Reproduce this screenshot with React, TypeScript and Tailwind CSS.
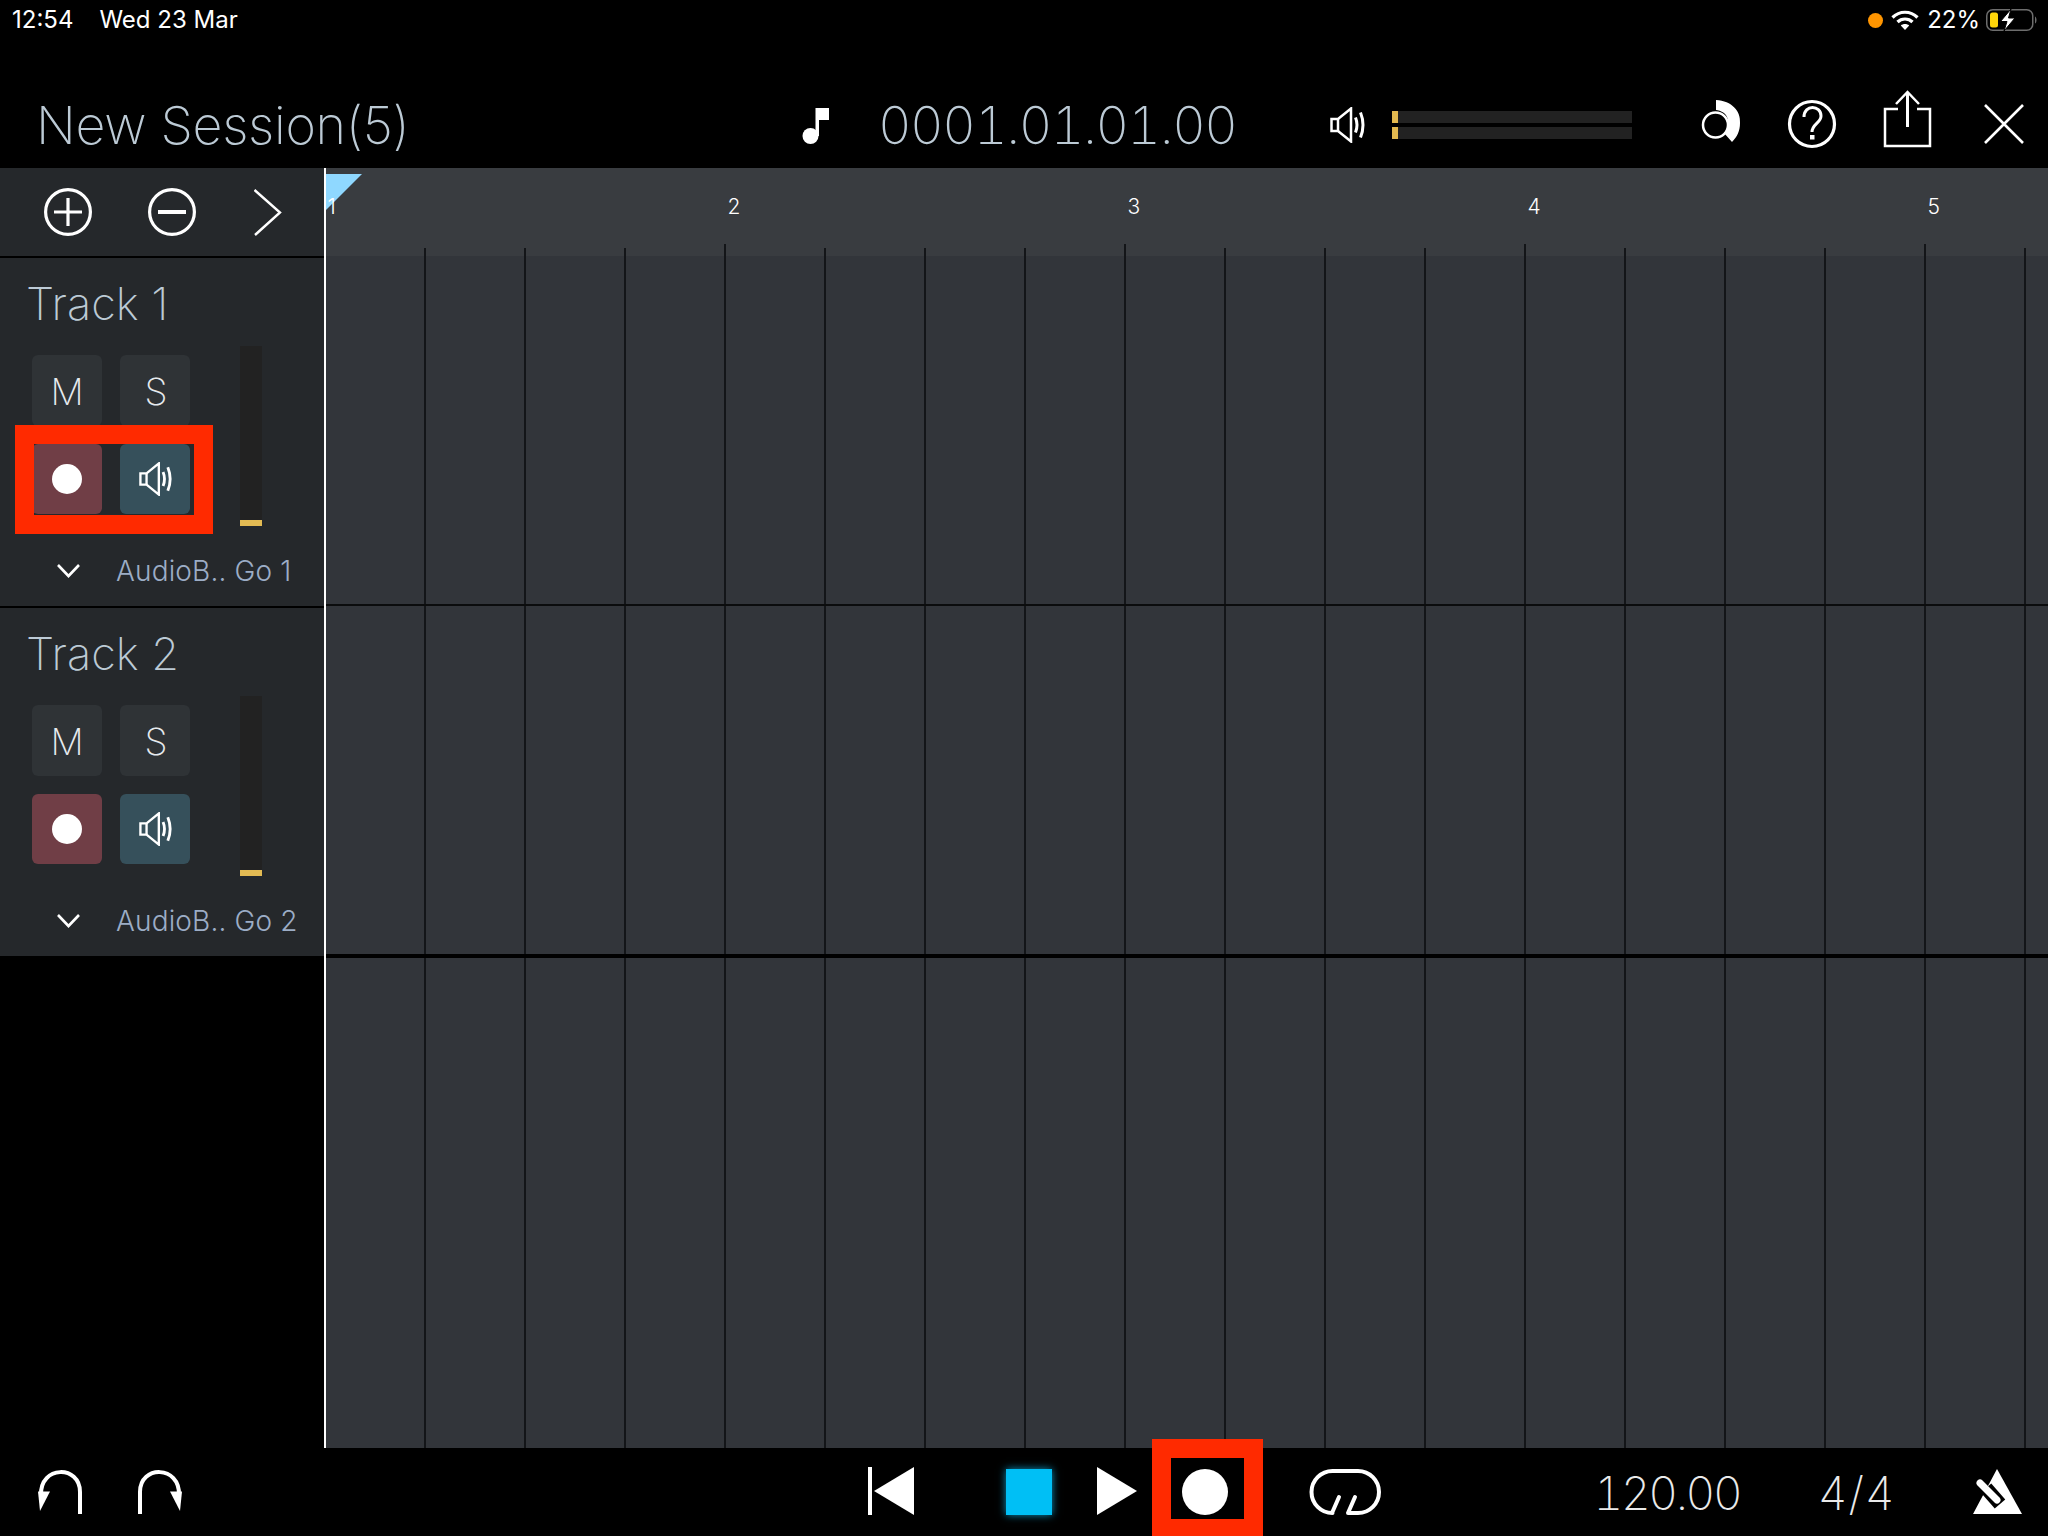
const thin = "font-['Inter',sans-serif] [font-weight:170]";
const CELLS = Array.from({ length: 18 }, (_, i) => i);
const BARS = [1, 2, 3, 4, 5];

function Speaker({ className }: { className: string }) {
  return (
    <svg viewBox="0 0 36 36" fill="none" stroke="white" strokeWidth="2.5" className={className}>
      <path d="M1.5 12H8L21 1.5V34.5L8 24H1.5Z" />
      <path d="M8 12V24" />
      <path d="M25.5 10.5Q28.5 18 25.5 25.5" strokeWidth="3" />
      <path d="M30.5 5.5Q35.5 18 30.5 30.5" strokeWidth="3" />
    </svg>
  );
}

function StatusBar() {
  return (
    <div className="flex h-[40px] items-center justify-between pl-[12px] pr-[10px] font-['Inter',sans-serif] text-[24px] text-white">
      <div className="flex gap-[26px]">
        <span>12:54</span>
        <span>Wed 23 Mar</span>
      </div>
      <div className="flex items-center">
        <div className="size-[15px] rounded-full bg-[#ff9500]" />
        <svg viewBox="0 0 28 20" className="ml-[8px] h-[20px] w-[28px]" fill="none" stroke="white" strokeWidth="3.2">
          <path d="M1.5 7.5C8.5 0.5 19.5 0.5 26.5 7.5" />
          <path d="M6.5 12C10.5 8 17.5 8 21.5 12" />
          <path d="M14 20L9.8 15.6C12 13.6 16 13.6 18.2 15.6Z" fill="white" stroke="none" />
        </svg>
        <span className="ml-[8px]">22%</span>
        <svg viewBox="0 0 52 22" className="ml-[6px] h-[22px] w-[52px]" fill="none">
          <rect x="0.75" y="0.75" width="46" height="20.5" rx="6" stroke="#6d6d6d" strokeWidth="1.5" />
          <path d="M49 7.5C51 8.5 51 13.5 49 14.5Z" fill="#6d6d6d" />
          <rect x="4" y="3.5" width="8" height="15" rx="2.5" fill="#ffd60a" />
          <path d="M25 0L14.5 12.5H21L18 22L29 9H22.5Z" fill="white" stroke="black" strokeWidth="1" />
        </svg>
      </div>
    </div>
  );
}

function Header() {
  return (
    <div className="flex h-[128px] items-center pl-[36px] pt-[42px]">
      <div className={`w-[766px] shrink-0 pt-[2px] text-[52px] leading-none tracking-[-0.3px] text-[#bccad5] ${thin}`}>New Session(5)</div>
      <svg viewBox="802 95 27 60" className="h-[60px] w-[27px] shrink-0" fill="white">
        <circle cx="810.5" cy="136" r="8" />
        <path d="M815.5 108H829V120H819V136H815.5Z" />
      </svg>
      <div className={`w-[501px] shrink-0 pl-[49px] pt-[2px] text-[52px] tabular-nums leading-none tracking-[-1.5px] text-[#bccad5] ${thin}`}>0001.01.01.00</div>
      <Speaker className="size-[36px] shrink-0" />
      <div className="ml-[26px] flex w-[240px] shrink-0 flex-col gap-[4px]">
        <div className="h-[12px] bg-[#222222]">
          <div className="h-full w-[6px] bg-[#e3b94f]" />
        </div>
        <div className="h-[12px] bg-[#222222]">
          <div className="h-full w-[6px] bg-[#e3b94f]" />
        </div>
      </div>
      <svg viewBox="1702 95 38 60" className="ml-[70px] h-[60px] w-[38px] shrink-0 overflow-visible" fill="none">
        <path d="M1716 100C1732 101 1741 111 1740 123C1740 131 1737 137 1732 142L1724 133C1729 128 1730 118 1724 113C1721 111 1718 110 1716 110Z" fill="white" />
        <circle cx="1715.5" cy="125" r="12.5" stroke="white" strokeWidth="2.5" />
      </svg>
      <svg viewBox="1786 95 52 60" className="ml-[46px] h-[60px] w-[52px] shrink-0" fill="none" stroke="white">
        <circle cx="1812" cy="124" r="22.5" strokeWidth="3.2" />
        <path d="M1804 117C1804 104 1821 105 1821 116C1821 123 1812 124 1812 132" strokeWidth="3" />
        <rect x="1810" y="135" width="4.5" height="4.5" fill="white" stroke="none" />
      </svg>
      <svg viewBox="1882 95 51 60" className="ml-[44px] h-[60px] w-[51px] shrink-0 overflow-visible" fill="none" stroke="white" strokeWidth="2.5">
        <path d="M1898 109H1885V146H1930V109H1917" />
        <path d="M1907.5 127V92" strokeWidth="3" />
        <path d="M1896 104L1907.5 92L1919 104" />
      </svg>
      <svg viewBox="1984 95 40 60" className="ml-[51px] h-[60px] w-[40px] shrink-0" fill="none" stroke="white" strokeWidth="2.6">
        <path d="M1985 105L2023 143M2023 105L1985 143" />
      </svg>
    </div>
  );
}

function Track({ name, input }: { name: string; input: string }) {
  return (
    <div className="flex h-[348px] flex-col bg-[#25282b] pl-[32px]">
      <div className={`-ml-[6px] flex h-[88px] items-center pt-[2px] text-[45px] leading-none text-[#bccad5] ${thin}`}>{name}</div>
      <div className="flex h-[180px]">
        <div className="grid grid-cols-[70px_70px] grid-rows-[71px_70px] gap-x-[18px] gap-y-[18px] pt-[9px]">
          <div className={`flex items-center justify-center rounded-[6px] bg-[#2f3336] pt-[2px] text-[37px] text-[#e6eaee] ${thin}`}>M</div>
          <div className={`flex items-center justify-center rounded-[6px] bg-[#2f3336] pl-[2px] pt-[2px] text-[37px] text-[#e6eaee] ${thin}`}>S</div>
          <div className="flex items-center justify-center rounded-[6px] bg-[#703e46]">
            <div className="size-[30px] rounded-full bg-white" />
          </div>
          <div className="flex items-center justify-center rounded-[6px] bg-[#36505b] pl-[2px]">
            <Speaker className="size-[34px]" />
          </div>
        </div>
        <div className="ml-[50px] flex h-full w-[22px] items-end bg-[#222222]">
          <div className="h-[6px] w-full bg-[#e3bb53]" />
        </div>
      </div>
      <div className="flex h-[80px] items-center pt-[9px]">
        <svg viewBox="0 0 23 14" className="ml-[25px] h-[14px] w-[23px]" fill="none" stroke="white" strokeWidth="2.6">
          <path d="M1 1L11.5 12L22 1" />
        </svg>
        <span className="ml-[36px] font-['Inter',sans-serif] text-[28px] font-light tracking-[0.15px] text-[#9cadc6]">{input}</span>
      </div>
    </div>
  );
}

function Sidebar() {
  return (
    <div className="w-[324px] shrink-0">
      <div className="flex h-[88px] items-center bg-[#25282b]">
        <svg viewBox="44 182 48 60" className="ml-[44px] h-[60px] w-[48px] shrink-0" fill="none" stroke="white" strokeWidth="3.2">
          <circle cx="68" cy="212" r="22.4" />
          <path d="M54 212H82M68 198V226" />
        </svg>
        <svg viewBox="148 182 48 60" className="ml-[56px] h-[60px] w-[48px] shrink-0" fill="none" stroke="white" strokeWidth="3.2">
          <circle cx="172" cy="212" r="22.4" />
          <path d="M158 212H186" strokeWidth="4" />
        </svg>
        <svg viewBox="254 182 28 60" className="ml-[58px] h-[60px] w-[28px] shrink-0" fill="none" stroke="white" strokeWidth="2.4">
          <path d="M254.5 190L280 212.5L255 235" />
        </svg>
      </div>
      <div className="h-[2px] bg-black" />
      <Track name="Track 1" input="AudioB.. Go 1" />
      <div className="h-[2px] bg-black" />
      <Track name="Track 2" input="AudioB.. Go 2" />
    </div>
  );
}

function GridRow({ className }: { className: string }) {
  return (
    <div className={`flex bg-[#32353a] ${className}`}>
      {CELLS.map((i) => (
        <div key={i} className="h-full w-[100px] shrink-0 border-r-2 border-[#131518]" />
      ))}
    </div>
  );
}

function Timeline() {
  return (
    <div className="relative flex-1 overflow-hidden">
      <svg viewBox="0 0 36 36" className="absolute left-0 top-[6px] size-[36px]">
        <path d="M0 0H36L0 36Z" fill="#8fd8ff" />
      </svg>
      <div className="h-[88px] bg-[#393c40]">
        <div className="relative flex h-[76px] items-center pt-[1px]">
          {BARS.map((bar) => (
            <div key={bar} className="w-[400px] shrink-0 pl-[1.5px] font-['Inter',sans-serif] text-[21px] font-light text-white">
              {bar}
            </div>
          ))}
        </div>
        <div className="flex h-[12px] items-end">
          {CELLS.map((i) => (
            <div key={i} className="flex w-[100px] shrink-0 justify-end">
              <div className={`w-[2px] bg-[#131518] ${i % 4 === 3 ? "h-[12px]" : "h-[8px]"}`} />
            </div>
          ))}
        </div>
      </div>
      <GridRow className="h-[348px]" />
      <div className="h-[2px] bg-[#0b0c0d]" />
      <GridRow className="h-[348px]" />
      <div className="h-[4px] bg-black" />
      <GridRow className="h-[490px]" />
    </div>
  );
}

function Transport() {
  return (
    <div className="flex h-[88px] items-center bg-black">
      <svg viewBox="38 1462 44 60" className="ml-[38px] h-[60px] w-[44px] shrink-0 overflow-visible" fill="none" stroke="white" strokeWidth="4">
        <path d="M80 1514V1492C80 1465 40 1465 41 1495" />
        <path d="M38 1491.5H50L40 1511Z" fill="white" stroke="none" />
      </svg>
      <svg viewBox="138 1462 44 60" className="ml-[56px] h-[60px] w-[44px] shrink-0 overflow-visible" fill="none" stroke="white" strokeWidth="4">
        <path d="M140 1514V1492C140 1465 180 1465 179 1495" />
        <path d="M182 1491.5H170L180 1511Z" fill="white" stroke="none" />
      </svg>
      <svg viewBox="868 1462 46 60" className="ml-[686px] h-[60px] w-[46px] shrink-0" fill="white">
        <rect x="868" y="1467" width="4" height="48" />
        <path d="M874 1491L914 1467V1515Z" />
      </svg>
      <div className="ml-[92px] h-[46px] w-[46px] shrink-0 bg-[#00bff5] shadow-[0_0_8px_#0b93bd]" />
      <svg viewBox="1097 1462 40 60" className="ml-[45px] h-[60px] w-[40px] shrink-0" fill="white">
        <path d="M1097 1467L1137 1491L1097 1515Z" />
      </svg>
      <div className="ml-[45px] size-[46px] shrink-0 rounded-full bg-white" />
      <svg viewBox="1310 1462 71 60" className="ml-[82px] h-[60px] w-[71px] shrink-0 overflow-visible" fill="none" stroke="white" strokeWidth="4" strokeLinecap="round" strokeLinejoin="round">
        <path d="M1339 1497L1332 1513H1332.5A21 21 0 0 1 1332.5 1471H1358A21 21 0 0 1 1358 1513H1348L1355 1497" />
      </svg>
      <div className={`ml-[186px] w-[200px] shrink-0 pt-[1px] text-center text-[46px] tabular-nums leading-none tracking-[-2.4px] text-[#eaeaea] ${thin}`}>120.00</div>
      <div className={`w-[180px] shrink-0 pt-[1px] text-center text-[46px] leading-none tracking-[1.8px] text-[#eaeaea] ${thin}`}>4/4</div>
      <svg viewBox="1973 1462 49 60" className="ml-[26px] h-[60px] w-[49px] shrink-0 overflow-visible">
        <path d="M1997 1469L2022 1514H1973Z" fill="white" />
        <path d="M1986 1488L2000 1504" stroke="black" strokeWidth="14" />
        <path d="M1980 1483L1997 1500" stroke="white" strokeWidth="7" strokeLinecap="round" />
      </svg>
    </div>
  );
}

export default function App() {
  return (
    <div className="relative flex h-[1536px] w-[2048px] flex-col overflow-hidden bg-black">
      <StatusBar />
      <Header />
      <div className="flex h-[1280px]">
        <Sidebar />
        <div className="w-[2px] shrink-0 bg-white" />
        <Timeline />
      </div>
      <Transport />
      <div className="absolute left-[15px] top-[425px] h-[109px] w-[198px] border-[19px] border-[#ff2a00]" />
      <div className="absolute left-[1152px] top-[1439px] h-[97px] w-[111px] border-[19px] border-b-[17px] border-[#ff2a00]" />
    </div>
  );
}
